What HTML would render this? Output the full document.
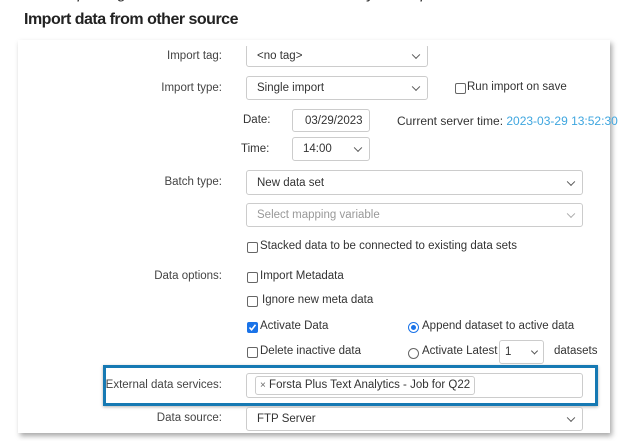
<!DOCTYPE html>
<html><head><style>
*{box-sizing:border-box;margin:0;padding:0}
body{width:619px;height:441px;background:#fff;position:relative;overflow:hidden;font-family:"Liberation Sans",Arial,sans-serif;font-size:11.5px;color:#333}
.a{position:absolute;white-space:nowrap}
.panel{position:absolute;left:18px;top:40px;width:592px;height:393px;background:#fff;box-shadow:2px 3px 5px rgba(0,0,0,.35)}
.lbl{position:absolute;text-align:right;width:200px;left:22px;color:#444}
.sel{position:absolute;border:1px solid #ccc;border-radius:3px;background:#fff;padding-left:10px;color:#333;display:flex;align-items:center}
.sel .ch{position:absolute;right:8px;top:50%;width:6px;height:6px;border-right:1.3px solid #555;border-bottom:1.3px solid #555;transform:translateY(-70%) rotate(45deg)}
.cb{position:absolute;width:11px;height:11px;border:1.3px solid #666;border-radius:2px;background:#fff}
.rd{position:absolute;width:11px;height:11px;border:1.3px solid #666;border-radius:50%}
</style></head><body>
<div class="a" style="left:60px;top:-15px;font-size:16px;font-style:italic;color:#333">Importing data from a Forsta Plus Text Analytics import</div>
<div class="panel"></div>
<div class="a" style="left:24px;top:11px;font-size:16px;font-weight:bold;color:#222;letter-spacing:-0.5px">Import data from other source</div>
<div style="position:absolute;left:18px;top:40px;width:592px;height:12px;background:#fff"></div>

<div class="lbl" style="top:50px">Import tag:</div>
<div class="sel" style="left:246px;top:44px;width:182px;height:23px">&lt;no tag&gt;<span class="ch"></span></div>
<div style="position:absolute;left:240px;top:40px;width:200px;height:6px;background:#fff"></div>

<div class="lbl" style="top:82px">Import type:</div>
<div class="sel" style="left:246px;top:76px;width:182px;height:24px">Single import<span class="ch"></span></div>
<div class="cb" style="left:455px;top:83px"></div>
<div class="a" style="left:467px;top:81px">Run import on save</div>

<div class="a" style="left:243px;top:114px">Date:</div>
<div class="sel" style="left:292px;top:109px;width:78px;height:23px;padding-left:12px">03/29/2023</div>
<div class="a" style="left:397px;top:114px;font-size:12px">Current server time: <span style="color:#3fa6df">2023-03-29 13:52:30</span></div>

<div class="a" style="left:241px;top:143px">Time:</div>
<div class="sel" style="left:292px;top:137px;width:78px;height:24px;padding-left:10px">14:00<span class="ch"></span></div>

<div class="lbl" style="top:176px">Batch type:</div>
<div class="sel" style="left:246px;top:170px;width:337px;height:25px">New data set<span class="ch"></span></div>

<div class="sel" style="left:246px;top:203px;width:337px;height:24px;color:#999">Select mapping variable<span class="ch" style="border-color:#aaa"></span></div>

<div class="cb" style="left:247px;top:242px"></div>
<div class="a" style="left:260px;top:240px">Stacked data to be connected to existing data sets</div>

<div class="lbl" style="top:270px">Data options:</div>
<div class="cb" style="left:247px;top:272px"></div>
<div class="a" style="left:260px;top:270px">Import Metadata</div>
<div class="cb" style="left:247px;top:296px"></div>
<div class="a" style="left:262px;top:294px">Ignore new meta data</div>

<div class="cb" style="left:247px;top:322px;background:#1a73e8;border-color:#1a73e8"><svg width="9" height="9" viewBox="0 0 9 9" style="position:absolute;left:0;top:0"><path d="M1.5 4.5L3.6 6.8L7.5 1.8" stroke="#fff" stroke-width="1.6" fill="none"/></svg></div>
<div class="a" style="left:260px;top:320px">Activate Data</div>
<div class="rd" style="left:408px;top:322px;border-color:#1a73e8"><div style="position:absolute;left:2px;top:2px;width:5px;height:5px;border-radius:50%;background:#1a73e8"></div></div>
<div class="a" style="left:422px;top:320px">Append dataset to active data</div>

<div class="cb" style="left:247px;top:347px"></div>
<div class="a" style="left:260px;top:345px">Delete inactive data</div>
<div class="rd" style="left:408px;top:348px"></div>
<div class="a" style="left:422px;top:345px">Activate Latest</div>
<div class="sel" style="left:499px;top:340px;width:45px;height:24px;padding-left:5px">1<span class="ch" style="right:6px;width:5px;height:5px"></span></div>
<div class="a" style="left:554px;top:345px">datasets</div>

<div style="position:absolute;left:103px;top:365px;width:495px;height:41px;border:3px solid #1679b3;box-shadow:0 1px 3px rgba(0,0,0,.3)"></div>
<div class="lbl" style="top:379px">External data services:</div>
<div class="sel" style="left:246px;top:373px;width:337px;height:25px;padding-left:8px"><span style="border:1px solid #ccc;border-radius:3px;padding:1px 4px 1px 4px;line-height:14px"><span style="color:#666;font-size:10px">×</span> Forsta Plus Text Analytics - Job for Q22</span></div>

<div class="lbl" style="top:412px">Data source:</div>
<div class="sel" style="left:246px;top:407px;width:337px;height:24px">FTP Server<span class="ch"></span></div>
</body></html>
